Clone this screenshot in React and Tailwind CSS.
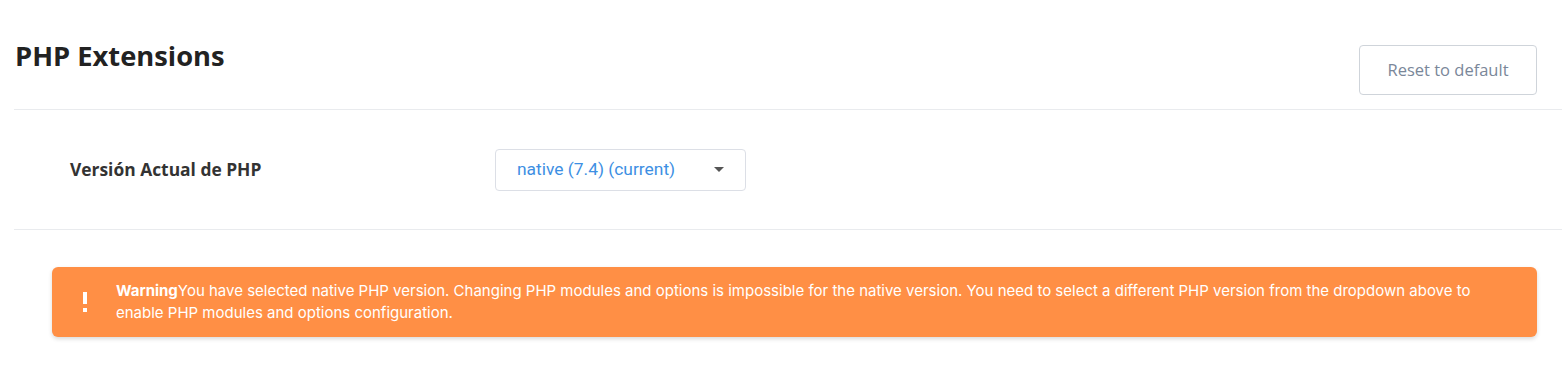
export default function App() {
  return (
    <div className="w-[1562px] h-[373px] bg-white pl-[14px]" style={{ fontFamily: '"Open Sans", sans-serif' }}>
      {/* Header */}
      <div className="flex justify-between items-start h-[110px] border-b border-[#e9ebee]">
        <h1 className="pt-[36px] pl-px text-[27.3px] font-bold text-[#222] leading-[40px]">PHP Extensions</h1>
        <button className="mt-[45px] mr-[25px] w-[178px] h-[50px] rounded-[4px] border border-[#cfd4da] text-[16.5px] text-[#7a8799] bg-white">
          Reset to default
        </button>
      </div>

      {/* Version row */}
      <div className="flex items-center h-[120px] border-b border-[#e9ebee]">
        <div className="w-[481px] shrink-0 pl-[56px] text-[17.4px] font-bold text-[#333]">Versión Actual de PHP</div>
        <button
          className="flex items-center justify-between w-[251px] h-[42px] pl-[21px] pr-[21px] rounded-[4px] border border-[#dcdfe6] bg-white text-[17.4px] text-[#3d8fe3]"
          style={{ fontFamily: "Roboto, sans-serif" }}
        >
          <span>native (7.4) (current)</span>
          <span className="w-0 h-0 border-l-[5px] border-r-[5px] border-t-[5px] border-l-transparent border-r-transparent border-t-[#555]" />
        </button>
      </div>

      {/* Warning */}
      <div className="pt-[37px] pl-[38px] pr-[25px]">
        <div
          className="flex items-center h-[70px] rounded-[6px] bg-[#ff8f45] text-white shadow-[0_2px_4px_rgba(0,0,0,0.15)]"
          style={{ fontFamily: "Inter, sans-serif" }}
        >
          <div className="w-[64px] shrink-0 flex flex-col items-center gap-[4px] pl-[1px]">
            <span className="w-[4px] h-[12px] bg-white" />
            <span className="w-[4px] h-[4px] bg-white" />
          </div>
          <p className="text-[15px] leading-[22px] pr-[60px]">
            <span className="font-bold">Warning</span>You have selected native PHP version. Changing PHP modules and options is impossible for the native version. You need to select a different PHP version from the dropdown above to enable PHP modules and options configuration.
          </p>
        </div>
      </div>
    </div>
  );
}
